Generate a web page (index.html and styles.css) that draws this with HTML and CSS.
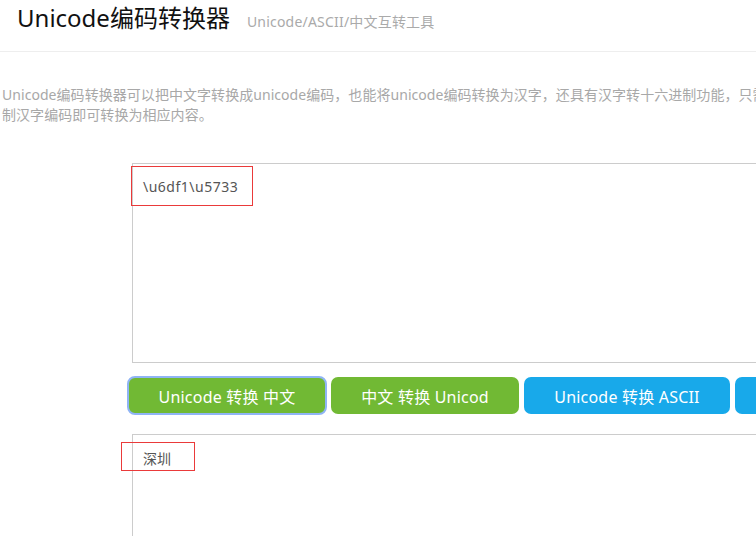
FILE: index.html
```html
<!DOCTYPE html>
<html lang="zh-CN">
<head>
<meta charset="utf-8">
<title>Unicode编码转换器</title>
<link rel="stylesheet" href="styles.css">
</head>
<body>
<header class="top">
  <h1 class="title">Unicode编码转换器</h1>
  <span class="subtitle">Unicode/ASCII/中文互转工具</span>
</header>
<p class="desc">
  <span class="line">Unicode编码转换器可以把中文字转换成unicode编码，也能将unicode编码转换为汉字，还具有汉字转十六进制功能，只需要输入要转换的unicode编码或者十六进</span>
  <span class="line">制汉字编码即可转换为相应内容。</span>
</p>
<main class="tool">
  <div class="box box-top">
    <div class="box-text code">\u6df1\u5733</div>
    <span class="mark mark-1"></span>
  </div>
  <div class="btns">
    <button class="btn green focused w1">Unicode 转换 中文</button>
    <button class="btn green w2">中文 转换 Unicod</button>
    <button class="btn blue w3">Unicode 转换 ASCII</button>
    <button class="btn blue w4">ASCII 转换 Unicode</button>
  </div>
  <div class="box box-bottom">
    <div class="box-text">深圳</div>
    <span class="mark mark-2"></span>
  </div>
</main>
</body>
</html>
```
FILE: styles.css
```css
html, body {
  margin: 0;
  padding: 0;
  background: #fff;
  overflow: hidden;
  width: 756px;
  height: 536px;
}
body {
  font-family: "Noto Sans", "Noto Sans CJK SC", sans-serif;
}
.top {
  display: flex;
  align-items: baseline;
  gap: 17px;
  height: 52px;
  box-sizing: border-box;
  padding: 0 0 0 17px;
  border-bottom: 1px solid #eeeeee;
}
.title {
  margin: 0;
  font-weight: normal;
  font-size: 24px;
  line-height: 36px;
  color: #111;
}
.subtitle {
  font-size: 14px;
  letter-spacing: 0.2px;
  color: #aaaaaa;
}
.desc {
  margin: 33px 0 0 2px;
  font-size: 14px;
  line-height: 20px;
  letter-spacing: 0.05px;
  color: #a8a8a8;
  white-space: nowrap;
}
.line { display: block; }
.tool {
  padding-left: 132px;
  margin-top: 38px;
}
.box {
  position: relative;
  width: 820px;
  border: 1px solid #cccccc;
  box-sizing: border-box;
}
.box-top { height: 200px; }
.box-bottom { height: 200px; }
.box-text {
  padding: 12px 10px;
  font-size: 14px;
  line-height: 20px;
  color: #555;
}
.box-text.code {
  font-size: 14px;
  letter-spacing: 0.5px;
  padding-top: 13px;
}
.box-bottom .box-text { padding-top: 14px; }
.mark {
  position: absolute;
  border: 1px solid #ea3a3a;
  box-sizing: border-box;
}
.mark-1 { left: -2px; top: 2px; width: 122px; height: 40px; }
.mark-2 { left: -12px; top: 7px; width: 74px; height: 29px; }
.btns {
  display: flex;
  gap: 5px;
  margin: 14px 0 20px -4px;
  white-space: nowrap;
}
.btn {
  flex: none;
  height: 37px;
  border: none;
  border-radius: 7px;
  color: #fff;
  font-family: "Noto Sans", "Noto Sans CJK SC", sans-serif;
  font-size: 16px;
  letter-spacing: 0.2px;
  padding: 0;
  overflow: hidden;
  text-align: center;
}
.green { background: #71b934; }
.blue { background: #18a9ea; }
.focused { outline: 2px solid #8fb4f5; outline-offset: -1px; }
.w1 { width: 198px; }
.w2 { width: 188px; }
.w3 { width: 206px; }
.w4 { width: 200px; }
```
